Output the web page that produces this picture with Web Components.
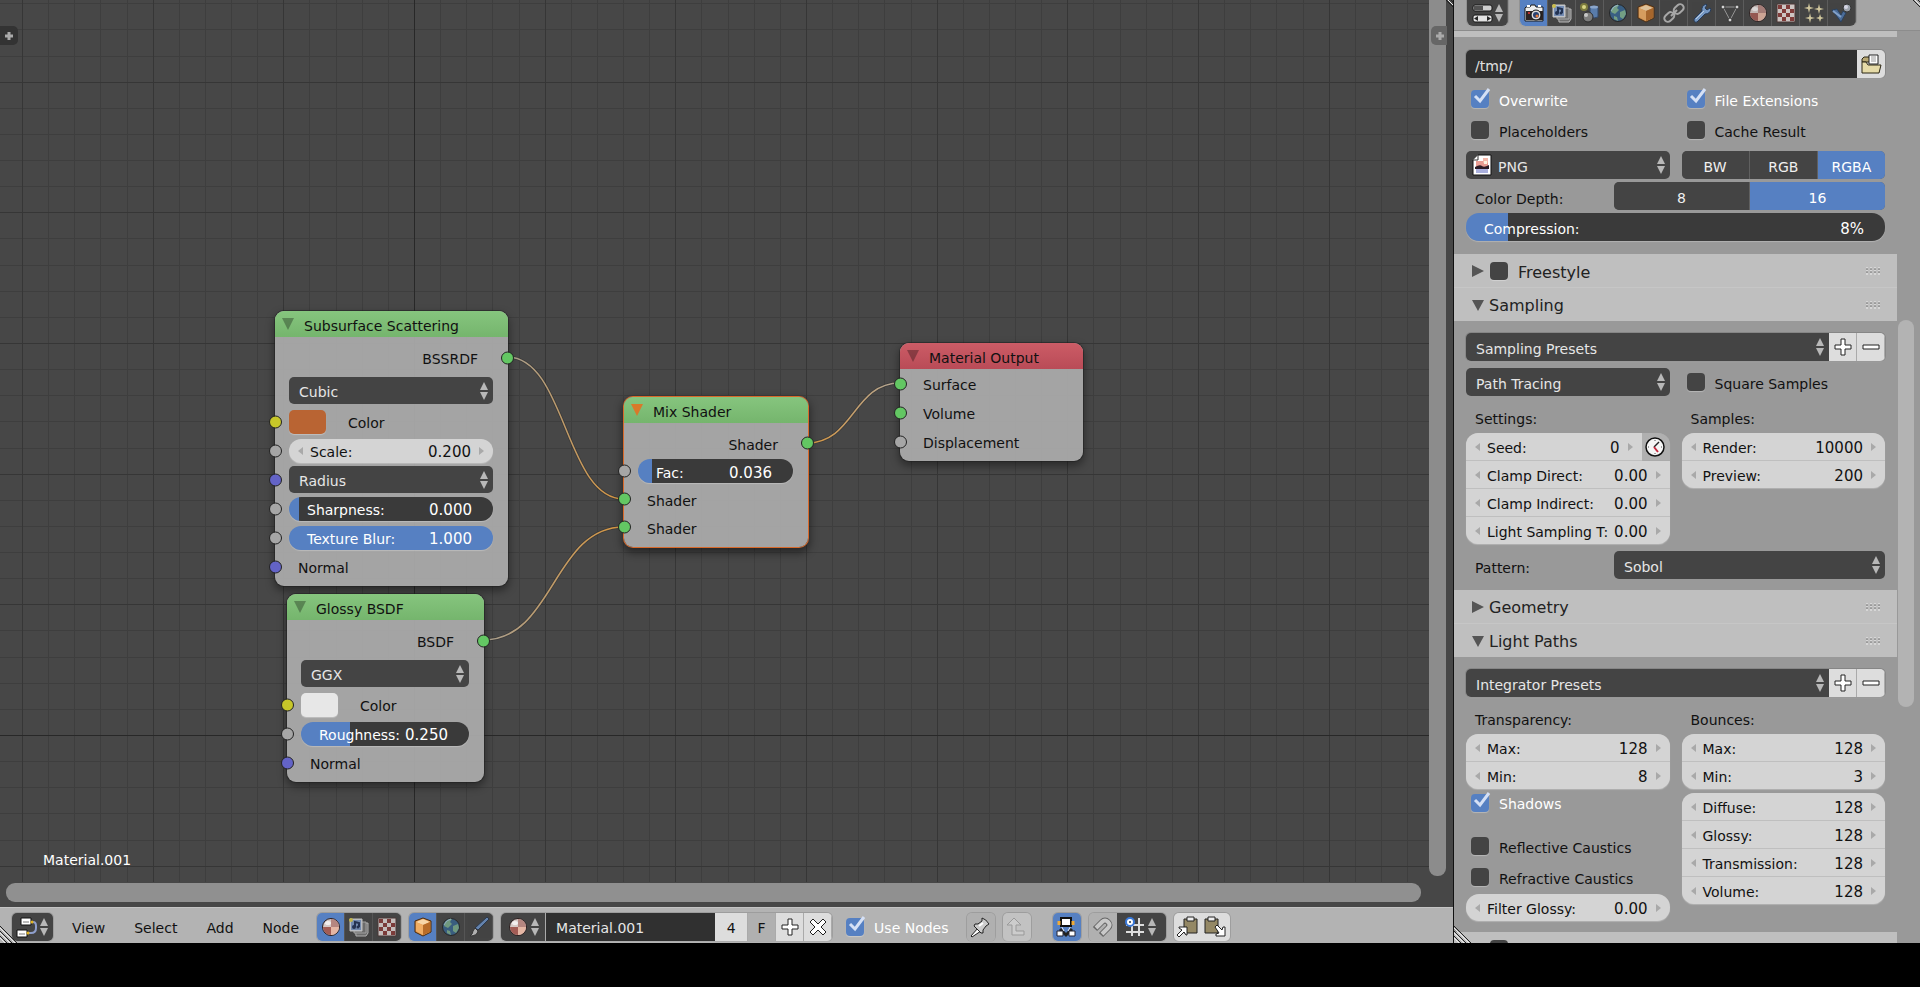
<!DOCTYPE html>
<html lang="en">
<head>
<meta charset="utf-8">
<title>Node Editor</title>
<style>
  html, body { height: 100%; }
  body {
    margin: 0;
    background: #000;
    font-family: "DejaVu Sans", Verdana, sans-serif;
    font-size: 14px;
    color: #111;
    overflow: hidden;
  }
</style>
</head>
<body>
<app-window></app-window>

<script>
const ICONS = {
  camera: `<path d="M2 4h4l1-2h4l1 2h7v14H1V5z" fill="#eee" stroke="#1b1b1b"/><path d="M2 8h17v9H2z" fill="#2c2424"/><path d="M3 3h3M14 3h3" stroke="#fff" stroke-width="2"/><circle cx="12" cy="12" r="5" fill="#ddd" stroke="#111"/><circle cx="12" cy="12" r="3" fill="#29406e"/><circle cx="13" cy="13" r="1.500" fill="#e87a38"/><circle cx="5" cy="10" r="1" fill="#e33"/>`,
  layers: `<path d="M6 7l13-1v10l-2 3-10 0z" fill="#777" stroke="#ccc"/><path d="M5 5h12v11H5z" fill="#777" stroke="#bbb"/><path d="M1 2h12v12H1z" fill="#cfd8e6" stroke="#ddd"/><path d="M2 3h10v10H2z" fill="#7f9cc9"/><path d="M6 10V5l4 1v4" fill="none" stroke="#1d2f55" stroke-width="2"/><circle cx="5" cy="10" r="2" fill="#1d2f55"/><circle cx="9" cy="10" r="1.500" fill="#1d2f55"/><circle cx="2" cy="3" r="2" fill="#e3d34f"/>`,
  scene: `<path d="M10 4q4-2 8 0v10q-4 2-8 0z" fill="#5d86be" stroke="#334b70"/><ellipse cx="14" cy="4" rx="4" ry="1.500" fill="#99b9e4"/><circle cx="4" cy="4" r="4" fill="#85843c"/><circle cx="4" cy="4" r="2" fill="#f3ef8e"/><circle cx="8" cy="14" r="5" fill="#888" stroke="#292929"/><circle cx="6" cy="12" r="2" fill="#ddd"/>`,
  world: `<circle cx="10" cy="10" r="8.500" fill="#38648f" stroke="#222"/><path d="M4 5q4-4 7-3l-2 3 2 2-4 4-4-2zM12 9l5-2 1 4-3 5-3-2zM6 13l3 1 1 4-4-2z" fill="#7caf8f"/><path d="M3 8q2-5 7-6" fill="none" stroke="#a9c9de"/>`,
  cube: `<path d="M10 1l8 3v11l-8 4-8-4V4z" fill="#df9348" stroke="#4a2b0f"/><path d="M10 2l7 3-7 3-7-3z" fill="#f8d7a8"/><path d="M3 5l7 3v10l-7-4z" fill="#f0ad63"/><path d="M10 8l7-3v10l-7 3z" fill="#b86c28"/>`,
  chain: `<g fill="none" stroke="#b9b9b9" stroke-width="2"><rect x="9" y="3" width="11" height="7" rx="3.500" transform="rotate(-42 14 6)"/><rect x="0" y="10" width="11" height="7" rx="3.500" transform="rotate(-42 6 14)"/><path d="M7 13l6-6"/></g>`,
  wrench: `<path d="M2 16l8-8q-1-5 4-7l1 1-2 3 2 2 3-2 1 1q-1 5-6 5l-8 8q-3 1-3-3z" fill="#7fa7da" stroke="#20395d"/><path d="M4 16l8-8" stroke="#d3e4f8"/>`,
  mesh: `<path d="M3 4h14l-7 13z" fill="none" stroke="#a4a4a4"/><g fill="#eee" stroke="#333"><circle cx="3" cy="4" r="2"/><circle cx="17" cy="4" r="2"/><circle cx="10" cy="17" r="2"/></g>`,
  material: `<circle cx="10" cy="10" r="8.500" fill="#d6c9c6" stroke="#281b1b"/><path d="M10 10V2a8 8 0 0 1 8 8z" fill="#b58680"/><path d="M10 10v8a8 8 0 0 0 8-8z" fill="#e5b6a4"/><path d="M10 10H2a8 8 0 0 0 8 8z" fill="#a35c55"/><ellipse cx="7" cy="6" rx="3" ry="2" fill="#fff" opacity=".7"/>`,
  checker: `<path d="M1 1h18v18H1z" fill="#e6dcda" stroke="#4d3432"/><path d="M2 2h4v4H2zM10 2h4v4h-4zM6 6h4v4H6zM14 6h4v4h-4zM2 10h4v4H2zM10 10h4v4h-4zM6 14h4v4H6zM14 14h4v4h-4z" fill="#8b3b39"/>`,
  stars: `<g fill="#eadfae"><path d="M5 0l1 4 4 1-4 1-1 4-1-4-4-1 4-1zM15 1l1 4 4 1-4 1-1 4-1-4-4-1 4-1zM6 10l1 4 4 1-4 1-1 4-1-4-4-1 4-1zM16 11l1 3 3 1-3 1-1 3-1-3-3-1 3-1z"/></g>`,
  physics: `<path d="M0 7l5-1 4 6 2-4 3 2-5 9z" fill="#4c74a8" stroke="#28405f"/><path d="M1 8l8 6" stroke="#8fb2df" stroke-width="2"/><circle cx="15" cy="5" r="4" fill="#a8b1bd" stroke="#333"/><circle cx="14" cy="4" r="2" fill="#eef"/>`,
  brush: `<path d="M18 0l2 2L9 13l-3-2z" fill="#6d94c9" stroke="#24354f"/><path d="M6 11l3 3q-1 5-8 5 3-2 3-5z" fill="#ccc" stroke="#333"/>`,
  props: `<g stroke="#111" stroke-width="1"><rect x="1" y="2" width="19" height="6" rx="2" fill="#e8e8e8"/><rect x="1" y="12" width="19" height="7" rx="2" fill="#fff"/></g><path d="M2 3h9v4H2z" fill="#555"/><path d="M6 13v5l-4-2.500zM15 13v5l4-2.500z" fill="#222"/>`,
  nodes: `<path d="M12 5h4q3 0 3 4v2q0 5-5 5h-2" fill="none" stroke="#8e9ecb" stroke-width="2"/><path d="M4 1h10v7H4zM0 13h10v7H0z" fill="#fff" stroke="#111"/><path d="M6 5h6M2 17h6" stroke="#777"/><circle cx="15" cy="5" r="1.500" fill="#e2b422"/><circle cx="11" cy="16" r="1.500" fill="#e2b422"/>`,
  image: `<path d="M6 0h13v20H1V5z" fill="#fff" stroke="#111"/><path d="M4 6h12v6H4z" fill="#e99c92"/><path d="M11 3h5v5h-5z" fill="#f4b7a9"/><path d="M12 6h3v3h-3z" fill="#fff2dd"/><path d="M3 12q5-3 7-1t7-1v4H3z" fill="#2b1b25"/><path d="M4 14h12v4H4z" fill="#aab0dd"/><path d="M1 5h5V0" fill="#fff" stroke="#333"/>`,
  folder: `<path d="M1 8V5l2-2h5l1 2v3z" fill="#b8a873" stroke="#2b2615"/><path d="M8 1h9v9H8z" fill="#fff" stroke="#222"/><path d="M10 3h5M10 5h5M10 7h5" stroke="#999"/><path d="M1 19V8h4l2 3h13l-2 8z" fill="#e6dba8" stroke="#2b2615"/>`,
  plus: `<path d="M8 2h4v6h6v4h-6v6H8v-6H2V8h6z" fill="#fff" stroke="#222"/>`,
  minus: `<path d="M2 8h16v4H2z" fill="#fff" stroke="#222"/>`,
  cross: `<path d="M5 2l5 5 5-5 3 3-5 5 5 5-3 3-5-5-5 5-3-3 5-5-5-5z" fill="#fff" stroke="#222"/>`,
  clock: `<circle cx="10" cy="10" r="9" fill="#f5f5f5" stroke="#111" stroke-width="1.500"/><path d="M14 5L9 10" stroke="#222" stroke-width="1.500"/><path d="M9 10l4 5" stroke="#c5283d" stroke-width="2"/><path d="M10 3v1M10 16v1M3 10h1M16 10h1" stroke="#555"/>`,
  pin: `<path d="M8 11l3 3-9 6-1-1z" fill="#fff" stroke="#222"/><path d="M12 1q4 1 7 6l-3 2-3 4 0 3-2 0-7-7 1-2h3l4-3z" fill="#ccc" stroke="#222"/><path d="M9 9l4-3" stroke="#fff" stroke-width="2"/>`,
  parent: `<path d="M8 1l7 7h-5v6h8v4H6V8H1z" fill="#ccc" stroke="#999"/>`,
  autonode: `<path d="M4 12l6 6 6-6" fill="none" stroke="#222" stroke-width="3"/><path d="M3 5l5 9M17 5l-5 9" stroke="#e6eefb" fill="none"/><path d="M5 1h10v8H5z" fill="#fff" stroke="#111" stroke-width="2"/><path d="M1 14h6v5H1zM13 14h6v5h-6z" fill="#fff" stroke="#223"/><path d="M3 4v4M17 4v4" stroke="#efab3a" stroke-width="3"/>`,
  magnet: `<g fill="none"><path d="M3 12l7-7q3-3 6 0t0 6l-7 7" stroke="#666" stroke-width="6"/><path d="M4 11l6-6q3-3 6 0t0 6l-6 6" stroke="#c8c8c8" stroke-width="4"/></g>`,
  snap: `<path d="M7 1v18M14 1v18M1 8h18M1 15h18" stroke="#ddd" stroke-width="2"/><circle cx="5" cy="5" r="4" fill="#fff" stroke="#3978d8" stroke-width="2"/><circle cx="5" cy="5" r="1" fill="#234"/>`,
  copy: `<path d="M7 2h13v14H7z" fill="#948865" stroke="#222"/><path d="M10 0h7v4h-7z" fill="#eee" stroke="#222"/><path d="M0 18l5-5-3-2v-1h8v8h-1l-2-3-5 5z" fill="#fff" stroke="#222"/>`,
  paste: `<path d="M0 2h13v14H0z" fill="#948865" stroke="#222"/><path d="M3 0h7v4H3z" fill="#eee" stroke="#222"/><path d="M10 10l2-2 5 5 1-3h2v9h-9v-2l3-1z" fill="#fff" stroke="#222"/>`
};

const arrows = `<svg class="arrows" width="8" height="20" viewBox="0 0 8 20" aria-hidden="true"><path d="M4 1l4 8H0zM4 19l4-8H0z" fill="#b8b8b8"/></svg>`;

// Small base: every element only supplies its template
class BaseElement extends HTMLElement {
  connectedCallback() {
    if (this.shadowRoot) return;
    this.attachShadow({ mode: "open" });
    const template = document.createElement("template");
    template.innerHTML = this.render();
    this.shadowRoot.appendChild(template.content.cloneNode(true));
    this.ready();
  }
  attr(name, fallback = "") {
    return this.hasAttribute(name) ? this.getAttribute(name) : fallback;
  }
  ready() {}
}

class UiIcon extends BaseElement {
  render() {
    return `
    <style>
      :host { display: block; width: 20px; height: 20px; flex: none; }
      svg { display: block; width: 100%; height: 100%; overflow: visible; }
    </style>
    <svg viewBox="0 0 20 20" aria-hidden="true">${ICONS[this.attr("name")]}</svg>`;
  }
}
customElements.define("ui-icon", UiIcon);

class IconButton extends BaseElement {
  render() {
    return `
    <style>
      :host { display: block; flex: none; --bg: #444; }
      :host([kind="light"]) { --bg: #ddd; }
      :host([kind="flat"]) { --bg: #b0b0b0; }
      :host([kind="faded"]) { --bg: #c2c2c2; }
      :host([active]) { --bg: #5680c2; }
      button {
        display: flex; align-items: center; justify-content: center; gap: 3px;
        box-sizing: border-box; height: 100%; width: 100%; min-width: 28px; padding: 0 3px;
        border: 0; background: var(--bg); font: inherit; color: #111;
        border-right: 1px solid var(--edge, transparent);
      }
      :host(:not([active])) ui-icon { opacity: var(--dim, 1); }
      slot { display: block; padding-top: 3px; }
    </style>
    <button type="button" aria-label="${this.attr("label")}">
      ${this.hasAttribute("name") ? `<ui-icon name="${this.attr("name")}"></ui-icon>` : `<slot></slot>`}
      ${this.hasAttribute("menu") ? arrows : ""}
    </button>`;
  }
}
customElements.define("icon-button", IconButton);

// Joins its children into one rounded block
class ButtonRow extends BaseElement {
  render() {
    return `
    <style>
      :host {
        display: flex; height: 28px; border-radius: 5px; overflow: hidden; flex: none;
        box-shadow: 0 0 0 1px rgba(0, 0, 0, .12), 0 1px 1px rgba(255, 255, 255, .25);
      }
      ::slotted([grow]) { flex: 1; min-width: 0; }
    </style>
    <slot></slot>`;
  }
}
customElements.define("button-row", ButtonRow);

class DropDown extends BaseElement {
  render() {
    return `
    <style>
      :host { display: block; height: 28px; min-width: 0; }
      .box {
        position: relative; display: flex; align-items: center; box-sizing: border-box;
        height: 100%; background: #444; border-radius: var(--radius, 5px); padding-right: 5px;
      }
      .box > ui-icon { margin-left: 6px; }
      .icon select { padding-left: 6px; }
      select {
        flex: 1; min-width: 0; height: 100%; box-sizing: border-box; padding: 3px 0 0 10px;
        appearance: none; border: 0; background: none; color: #e6e6e6; font: inherit;
      }
      option { color: #111; }
      .arrows { flex: none; }
    </style>
    <div class="box ${this.hasAttribute("icon") ? "icon" : ""}">
      ${this.hasAttribute("icon") ? `<ui-icon name="${this.attr("icon")}"></ui-icon>` : ""}
      <select aria-label="${this.attr("label", this.attr("value"))}"><option>${this.attr("value")}</option></select>
      ${arrows}
    </div>`;
  }
}
customElements.define("drop-down", DropDown);

class CheckBox extends BaseElement {
  render() {
    return `
    <style>
      :host { display: block; height: 28px; }
      label { display: flex; align-items: center; height: 100%; gap: 10px; padding-left: 5px; white-space: nowrap; }
      :host([checked]) label { color: #fff; }
      .box { position: relative; width: 18px; height: 18px; flex: none; }
      input {
        appearance: none; display: block; margin: 0; width: 18px; height: 18px; border-radius: 4px;
        background: #444; box-shadow: 0 1px 1px rgba(255, 255, 255, .3);
      }
      input:checked { background: #5680c2; }
      svg { position: absolute; left: 0; top: -3px; display: none; pointer-events: none; }
      input:checked + svg { display: block; }
      span { padding-top: 3px; }
    </style>
    <label>
      <div class="box">
        <input type="checkbox" ${this.hasAttribute("checked") ? "checked" : ""}>
        <svg width="20" height="18" viewBox="0 0 20 18"><path d="M4 9l5 5 9-12" fill="none" stroke="#d5e0f5" stroke-width="3"/></svg>
      </div>
      <span>${this.attr("label")}</span>
    </label>`;
  }
}
customElements.define("check-box", CheckBox);

// Number with step arrows, or a filled slider when "fill" is set
class NumField extends BaseElement {
  render() {
    const slider = this.hasAttribute("fill");
    return `
    <style>
      :host { display: block; height: 27px; min-width: 0; }
      label {
        display: flex; align-items: center; box-sizing: border-box; height: 100%;
        padding: 0 8px; background: #d4d4d4; border-radius: var(--radius, 13px);
        box-shadow: 0 1px 1px rgba(255, 255, 255, .25); white-space: nowrap;
      }
      .slider {
        padding: 0 21px 0 18px; color: #fff;
        background: linear-gradient(to right, #5680c2 ${this.attr("fill")}%, #3a3a3a ${this.attr("fill")}%);
      }
      svg { flex: none; }
      span { padding: 3px 0 0 7px; }
      .slider span { padding-left: 0; }
      input {
        flex: 1; width: 20px; min-width: 0; height: 100%; box-sizing: border-box; margin: 0; border: 0;
        padding: 3px 8px 0 0; background: none; color: inherit;
        font: inherit; font-size: 15px; text-align: right;
      }
      .slider input { padding-right: 0; }
    </style>
    <label class="${slider ? "slider" : ""}">
      ${slider ? "" : `<svg width="6" height="8"><path d="M6 0v8L1 4z" fill="#a9a9a9"/></svg>`}
      <span>${this.attr("label")}</span>
      <input type="text" value="${this.attr("value")}">
      ${slider ? "" : `<svg width="6" height="8"><path d="M0 0v8l5-4z" fill="#a9a9a9"/></svg>`}
    </label>`;
  }
}
customElements.define("num-field", NumField);

class NumGroup extends BaseElement {
  render() {
    return `
    <style>
      :host {
        display: flex; flex-direction: column; gap: 1px; border-radius: 12px; overflow: hidden;
        background: #aaa; box-shadow: 0 1px 1px rgba(255, 255, 255, .25); --radius: 0px;
      }
    </style>
    <slot></slot>`;
  }
}
customElements.define("num-group", NumGroup);

class RadioRow extends BaseElement {
  render() {
    const value = this.attr("value");
    const name = this.attr("label");
    return `
    <style>
      :host { display: block; height: 28px; min-width: 0; }
      .row { display: flex; gap: 1px; height: 100%; background: #606060; border-radius: 5px; overflow: hidden; }
      label {
        flex: 1; position: relative; display: flex; align-items: center; justify-content: center;
        background: #444; color: #f0f0f0; padding-top: 3px;
      }
      label:has(input:checked) { background: #5680c2; color: #fff; }
      input { position: absolute; inset: 0; margin: 0; opacity: 0; }
    </style>
    <div class="row" role="radiogroup" aria-label="${name}">
      ${this.attr("options").split(",").map((o) => `
        <label><input type="radio" name="opt" ${o === value ? "checked" : ""}>${o}</label>`).join("")}
    </div>`;
  }
}
customElements.define("radio-row", RadioRow);

class PropsPanel extends BaseElement {
  render() {
    const open = this.hasAttribute("open");
    const tri = open ? "M0 1h12l-6 11z" : "M0 0l12 6-12 6z";
    return `
    <style>
      :host { display: block; }
      header {
        display: flex; align-items: center; height: 33px; background: #bfbfbf;
        padding: 0 15px 0 18px; font-size: 16px; color: #222; gap: 5px;
      }
      :host(:not([open])) header { border-bottom: 1px solid #c6c6c6; }
      button { display: flex; align-items: center; border: 0; padding: 0; background: none; font: inherit; color: inherit; gap: 5px; }
      check-box { margin-left: -4px; }
      .title { padding-top: 2px; }
      .grip { margin-left: auto; }
      .body { padding: 12px 12px 11px; }
    </style>
    <header>
      <button type="button" aria-expanded="${open}" aria-label="${this.attr("label")}">
        <svg width="12" height="12"><path d="${tri}" fill="#555"/></svg>
        ${this.hasAttribute("toggle") ? "" : `<span class="title">${this.attr("label")}</span>`}
      </button>
      ${this.hasAttribute("toggle") ? `<check-box label="${this.attr("label")}"></check-box>` : ""}
      <svg class="grip" width="16" height="8"><path d="M0 1h16M0 4h16M0 7h16" stroke="#eee" stroke-dasharray="2 2"/><path d="M0 2h16M0 5h16" stroke="#777" stroke-dasharray="2 2"/></svg>
    </header>
    ${open ? `<div class="body"><slot></slot></div>` : ""}`;
  }
}
customElements.define("props-panel", PropsPanel);

// Diagonal lines in the corner of an area
class AreaGrip extends BaseElement {
  render() {
    return `
    <style>
      :host { display: block; position: absolute; width: 17px; height: 17px; pointer-events: none; }
      :host([corner="bottom"]) { left: 0; bottom: 0; }
      :host([corner="top"]) { right: -5px; top: -5px; }
      svg { display: block; }
    </style>
    <svg width="17" height="17"><g transform="${this.attr("corner") === "top" ? "rotate(180 8.5 8.5)" : ""}">
      <path d="M0 0l17 17M0 5l12 12M0 10l7 7" stroke="#222"/><path d="M0 2l15 15M0 7l10 10M0 12l5 5" stroke="#eee"/>
    </g></svg>`;
  }
}
customElements.define("area-grip", AreaGrip);

class NodeSocket extends BaseElement {
  render() {
    return `
    <style>
      :host {
        position: absolute; left: -6px; top: 50%; width: 13px; height: 13px; box-sizing: border-box;
        transform: translateY(-50%); border-radius: 50%; border: 1px solid #222; background: #a6a6a6;
      }
      :host([side="out"]) { left: auto; right: -6px; }
      :host([type="shader"]) { background: #63c763; }
      :host([type="color"]) { background: #c7c729; }
      :host([type="vector"]) { background: #6363c7; }
    </style>`;
  }
}
customElements.define("node-socket", NodeSocket);

class NodeRow extends BaseElement {
  render() {
    return `
    <style>
      :host { position: relative; display: flex; align-items: center; height: var(--row, 29px); padding: 0 15px 0 14px; }
      :host([tall]) { height: 33px; }
      :host([out]) { justify-content: flex-end; padding-right: 30px; }
      :host([text]) { padding-left: 23px; }
      span { padding-top: 3px; }
      .swatch { width: 37px; height: 24px; border: 0; border-radius: 5px; padding: 0; margin-right: 22px; background: ${this.attr("swatch")}; box-shadow: 0 1px 1px rgba(255, 255, 255, .3); }
      ::slotted(*) { flex: 1; --radius: 12px; height: 24px; }
      ::slotted(drop-down) { --radius: 5px; height: 27px; }
    </style>
    ${this.hasAttribute("socket") ? `<node-socket type="${this.attr("socket")}" ${this.hasAttribute("out") ? `side="out"` : ""}></node-socket>` : ""}
    ${this.hasAttribute("swatch") ? `<button class="swatch" type="button" aria-label="Pick color"></button>` : ""}
    ${this.hasAttribute("label") ? `<span>${this.attr("label")}</span>` : ""}
    <slot></slot>`;
  }
}
customElements.define("node-row", NodeRow);

class ShaderNode extends BaseElement {
  render() {
    return `
    <style>
      :host {
        position: absolute; display: block; border-radius: 9px; background: rgba(168, 168, 168, .96);
        box-shadow: 0 0 0 1px rgba(30, 30, 30, .5), 0 4px 9px 1px rgba(0, 0, 0, .4);
      }
      :host([selected]) { box-shadow: 0 0 0 1px #d8692a, 0 4px 9px 2px rgba(0, 0, 0, .45); }
      header {
        display: flex; align-items: center; gap: 10px; height: 26px; padding-left: 7px;
        border-radius: 9px 9px 0 0; background: linear-gradient(#86c57e, #75b56d);
      }
      :host([kind="output"]) header { background: linear-gradient(#cc5c66, #b94b57); }
      path { fill: rgba(0, 0, 0, .3); }
      :host([selected]) path { fill: #d9792a; }
      span { padding-top: 4px; }
      .body { padding: var(--pad, 4px 0 5px); }
      :host([kind="output"]) .body { padding-top: 0; }
    </style>
    <header>
      <svg width="12" height="12"><path d="M0 0h12l-6 12z"/></svg>
      <span>${this.attr("label")}</span>
    </header>
    <div class="body"><slot></slot></div>`;
  }
}
customElements.define("shader-node", ShaderNode);

class NodeCanvas extends BaseElement {
  render() {
    return `
    <style>
      :host { display: block; position: relative; overflow: hidden; min-width: 0; min-height: 0; }
      svg.back { position: absolute; inset: 0; width: 100%; height: 100%; }
      .tab {
        position: absolute; left: 0; top: 26px; width: 18px; height: 19px; border: 0; padding: 0;
        border-radius: 0 5px 5px 0; background: #333;
      }
      .name { position: absolute; left: 43px; bottom: 14px; color: #fff; }
      .sss { left: 275px; top: 311px; width: 233px; }
      .glossy { left: 287px; top: 594px; width: 197px; }
      .mix { left: 624px; top: 397px; width: 184px; --row: 28px; --pad: 6px 0; }
      .output { left: 900px; top: 343px; width: 183px; }
    </style>
    <svg class="back">
      <defs>
        <linearGradient id="toMix"><stop offset="0" stop-color="#a89f90"/><stop offset="1" stop-color="#d8963f"/></linearGradient>
        <linearGradient id="fromMix"><stop offset="0" stop-color="#d8963f"/><stop offset="1" stop-color="#b0a79a"/></linearGradient>
      </defs>
      <g class="grid"></g>
      <g class="links" fill="none"></g>
    </svg>
    <shader-node class="sss" label="Subsurface Scattering">
      <node-row tall out label="BSSRDF" socket="shader"></node-row>
      <node-row tall><drop-down label="Falloff" value="Cubic"></drop-down></node-row>
      <node-row socket="color" swatch="#b96433" label="Color"></node-row>
      <node-row socket="value"><num-field label="Scale:" value="0.200"></num-field></node-row>
      <node-row socket="vector"><drop-down value="Radius"></drop-down></node-row>
      <node-row socket="value"><num-field label="Sharpness:" value="0.000" fill="5"></num-field></node-row>
      <node-row socket="value"><num-field label="Texture Blur:" value="1.000" fill="100"></num-field></node-row>
      <node-row text socket="vector" label="Normal"></node-row>
    </shader-node>
    <shader-node class="glossy" label="Glossy BSDF">
      <node-row tall out label="BSDF" socket="shader"></node-row>
      <node-row tall><drop-down label="Distribution" value="GGX"></drop-down></node-row>
      <node-row socket="color" swatch="#e7e7e7" label="Color"></node-row>
      <node-row socket="value"><num-field label="Roughness:" value="0.250" fill="29"></num-field></node-row>
      <node-row text socket="vector" label="Normal"></node-row>
    </shader-node>
    <shader-node class="mix" label="Mix Shader" selected>
      <node-row out label="Shader" socket="shader"></node-row>
      <node-row socket="value"><num-field label="Fac:" value="0.036" fill="9"></num-field></node-row>
      <node-row text socket="shader" label="Shader"></node-row>
      <node-row text socket="shader" label="Shader"></node-row>
    </shader-node>
    <shader-node class="output" kind="output" label="Material Output">
      <node-row text socket="shader" label="Surface"></node-row>
      <node-row text socket="shader" label="Volume"></node-row>
      <node-row text socket="value" label="Displacement"></node-row>
    </shader-node>
    <button class="tab" type="button" aria-label="Show tools"><svg width="18" height="19"><path d="M5 10h8M9 6v8" stroke="#aaa" stroke-width="3"/></svg></button>
    <div class="name">Material.001</div>`;
  }

  ready() {
    this.drawGrid();
    this.drawLinks();
  }

  drawGrid() {
    const origin = { x: 414, y: 735 };
    const step = 392 / 15;
    let minor = "", major = "";
    for (let i = -60; i <= 120; i++) {
      const x = Math.round(origin.x + i * step);
      const y = Math.round(origin.y + i * step);
      const line = `M${x + 0.5} 0V3000M0 ${y + 0.5}H5000`;
      if (i % 5 === 0) major += line;
      else minor += line;
    }
    this.shadowRoot.querySelector(".grid").innerHTML = `
      <path d="M0 0h5000v3000H0z" fill="#474747"/>
      <path d="${minor}" stroke="#3e3e3e"/>
      <path d="${major}" stroke="#363636"/>
      <path d="M${origin.x + 0.5} 0V3000M0 ${origin.y + 0.5}H5000" stroke="#282828"/>`;
  }

  drawLinks() {
    const links = [
      [507, 357, 624, 499, "toMix"],
      [483, 640, 624, 527, "toMix"],
      [807, 443, 900, 383, "fromMix"],
    ];
    this.shadowRoot.querySelector(".links").innerHTML = links.map(([x1, y1, x2, y2, paint]) => {
      const h = Math.round((x2 - x1) / 2);
      const d = `M${x1} ${y1}C${x1 + h} ${y1} ${x2 - h} ${y2} ${x2} ${y2}`;
      return `<path d="${d}" stroke="#2b2b2b" stroke-width="3" opacity=".5"/><path d="${d}" stroke="url(#${paint})" stroke-width="1.500"/>`;
    }).join("");
  }
}
customElements.define("node-canvas", NodeCanvas);

class EditorHeader extends BaseElement {
  render() {
    return `
    <style>
      :host {
        position: relative; display: flex; align-items: center; height: 33px; padding: 2px 0 0 12px;
        background: #b3b3b3; border-top: 1px solid #c4c4c4; overflow: hidden;
      }
      nav { display: flex; margin: 0 4px; }
      nav button { border: 0; background: none; font: inherit; color: #111; padding: 3px 14px 0 15px; }
      button-row + button-row { margin-left: 8px; }
      .tabs { --edge: #555; --dim: .8; }
      .id { width: 331px; }
      .id input {
        flex: 1; min-width: 0; border: 0; padding: 3px 10px 0; background: #303030; color: #e6e6e6; font: inherit;
      }
      .id icon-button { --edge: #aaa; }
      .users { width: 33px; }
      check-box { margin-left: 9px; }
      .pin { margin-left: 18px; }
      .auto { margin-left: 22px !important; }
    </style>
    <button-row><icon-button name="nodes" menu label="Editor type" style="width: 41px"></icon-button></button-row>
    <nav>
      <button type="button">View</button><button type="button">Select</button><button type="button">Add</button><button type="button">Node</button>
    </nav>
    <button-row class="tabs">
      <icon-button name="material" active label="Shader nodes"></icon-button>
      <icon-button name="layers" label="Compositing nodes"></icon-button>
      <icon-button name="checker" label="Texture nodes"></icon-button>
    </button-row>
    <button-row class="tabs">
      <icon-button name="cube" active label="Object"></icon-button>
      <icon-button name="world" label="World"></icon-button>
      <icon-button name="brush" label="Line style"></icon-button>
    </button-row>
    <button-row class="id">
      <icon-button name="material" menu label="Browse material" style="width: 45px"></icon-button>
      <input type="text" value="Material.001" aria-label="Material name">
      <icon-button class="users" kind="light" label="4 users">4</icon-button>
      <icon-button kind="flat" label="Fake user">F</icon-button>
      <icon-button kind="light" name="plus" label="Add material"></icon-button>
      <icon-button kind="light" name="cross" label="Unlink material"></icon-button>
    </button-row>
    <check-box checked label="Use Nodes"></check-box>
    <button-row class="pin"><icon-button kind="flat" name="pin" label="Pin"></icon-button></button-row>
    <button-row><icon-button kind="faded" name="parent" label="Parent node tree"></icon-button></button-row>
    <button-row class="auto"><icon-button active name="autonode" label="Auto offset"></icon-button></button-row>
    <button-row>
      <icon-button kind="flat" name="magnet" label="Snap"></icon-button>
      <icon-button name="snap" menu label="Snap element" style="width: 49px"></icon-button>
    </button-row>
    <button-row>
      <icon-button kind="light" name="copy" label="Copy"></icon-button>
      <icon-button kind="light" name="paste" label="Paste"></icon-button>
    </button-row>
    <area-grip corner="bottom"></area-grip>`;
  }
}
customElements.define("editor-header", EditorHeader);

class NodeEditor extends BaseElement {
  render() {
    return `
    <style>
      :host {
        position: relative; display: grid; min-width: 0; min-height: 0; background: #474747; overflow: hidden;
        grid-template: minmax(0, 1fr) 25px auto / minmax(0, 1fr) 24px; border-right: 1px solid #111;
      }
      .vertical { width: 17px; height: calc(100% - 6px); background: #8c8c8c; border-radius: 0 0 8px 8px; }
      .horizontal { height: 19px; margin: 1px 8px 0 6px; background: #909090; border-radius: 9px; }
      editor-header { grid-column: 1 / -1; }
      .tab {
        position: absolute; right: 6px; top: 26px; width: 16px; height: 19px; border: 0; padding: 0;
        border-radius: 5px 0 0 5px; background: #666;
      }
    </style>
    <node-canvas></node-canvas>
    <div class="vertical"></div>
    <div class="horizontal"></div>
    <div></div>
    <editor-header></editor-header>
    <button class="tab" type="button" aria-label="Show properties"><svg width="16" height="19"><path d="M5 10h8M9 6v8" stroke="#aaa" stroke-width="3"/></svg></button>
    <area-grip corner="top"></area-grip>`;
  }
}
customElements.define("node-editor", NodeEditor);

class PropertiesEditor extends BaseElement {
  render() {
    const tabs = ["camera", "layers", "scene", "world", "cube", "chain", "wrench", "mesh", "material", "checker", "stars", "physics"];
    return `
    <style>
      :host {
        position: relative; display: grid; min-width: 0; min-height: 0; overflow: hidden; background: #999;
        grid-template: 31px minmax(0, 1fr) / minmax(0, 1fr) 23px;
      }
      .top { grid-column: 1 / -1; display: flex; gap: 12px; padding-left: 13px; background: #a5a5a5; border-bottom: 1px solid #8c8c8c; }
      .top button-row { height: 26px; border-radius: 0 0 6px 6px; --edge: #5c5c5c; --dim: .85; }
      .list { overflow: hidden; }
      .output { border-top: 6px solid #bfbfbf; padding: 13px 12px; }
      .stack { display: flex; flex-direction: column; gap: 7px; }
      .tight { display: flex; flex-direction: column; gap: 3px; }
      .cols { display: grid; grid-template-columns: 1fr 1fr; gap: 3px 12px; align-items: start; }
      .split { display: grid; grid-template-columns: 148px 1fr; align-items: center; }
      .label { height: 27px; line-height: 27px; box-sizing: border-box; padding: 3px 0 0 9px; white-space: nowrap; }
      .path { flex: 1; min-width: 0; border: 0; background: #303030; color: #e0e0e0; font: inherit; padding: 3px 9px 0; }
      .presets { --radius: 0px; }
      .presets icon-button { --edge: #aaa; }
      .seed { display: flex; }
      .seed num-field { flex: 1; }
      .seed icon-button { height: 27px; }
      .slider { height: 28px; }
      .checks { margin-top: 16px; }
      .shadows { height: 27px; }
      .bounces { display: flex; flex-direction: column; gap: 4px; }
      .scroll { display: grid; grid-template-rows: 289fr 387fr 231fr; padding: 0 6px 5px 1px; }
      .thumb { grid-row: 2; background: #b3b3b3; border-radius: 8px; }
    </style>
    <div class="top">
      <button-row><icon-button name="props" menu label="Editor type" style="width: 41px"></icon-button></button-row>
      <button-row>${tabs.map((t, i) => `<icon-button name="${t}" label="${t}" ${i ? "" : "active"}></icon-button>`).join("")}</button-row>
    </div>
    <div class="list">
      <section class="output stack">
        <button-row>
          <input class="path" type="text" value="/tmp/" aria-label="Output path">
          <icon-button kind="light" name="folder" label="Browse"></icon-button>
        </button-row>
        <div class="cols">
          <check-box checked label="Overwrite"></check-box><check-box checked label="File Extensions"></check-box>
          <check-box label="Placeholders"></check-box><check-box label="Cache Result"></check-box>
        </div>
        <div class="tight">
          <div class="cols">
            <drop-down icon="image" label="File format" value="PNG"></drop-down>
            <radio-row label="Color mode" options="BW,RGB,RGBA" value="RGBA"></radio-row>
          </div>
          <div class="split">
            <div class="label">Color Depth:</div>
            <radio-row label="Color depth" options="8,16" value="16"></radio-row>
          </div>
          <num-field class="slider" label="Compression:" value="8%" fill="10"></num-field>
        </div>
      </section>
      <props-panel toggle label="Freestyle"></props-panel>
      <props-panel open label="Sampling">
        <div class="stack">
          <button-row class="presets">
            <drop-down grow value="Sampling Presets"></drop-down>
            <icon-button kind="light" name="plus" label="Add preset"></icon-button>
            <icon-button kind="light" name="minus" label="Remove preset"></icon-button>
          </button-row>
          <div class="cols">
            <drop-down label="Integrator" value="Path Tracing"></drop-down>
            <check-box label="Square Samples"></check-box>
          </div>
          <div class="cols">
            <div class="label">Settings:</div><div class="label">Samples:</div>
            <num-group>
              <div class="seed">
                <num-field label="Seed:" value="0"></num-field>
                <icon-button kind="flat" name="clock" label="Animate seed"></icon-button>
              </div>
              <num-field label="Clamp Direct:" value="0.00"></num-field>
              <num-field label="Clamp Indirect:" value="0.00"></num-field>
              <num-field label="Light Sampling T:" value="0.00"></num-field>
            </num-group>
            <num-group>
              <num-field label="Render:" value="10000"></num-field>
              <num-field label="Preview:" value="200"></num-field>
            </num-group>
          </div>
          <div class="split">
            <div class="label">Pattern:</div>
            <drop-down label="Pattern" value="Sobol"></drop-down>
          </div>
        </div>
      </props-panel>
      <props-panel label="Geometry"></props-panel>
      <props-panel open label="Light Paths">
        <div class="stack">
          <button-row class="presets">
            <drop-down grow value="Integrator Presets"></drop-down>
            <icon-button kind="light" name="plus" label="Add preset"></icon-button>
            <icon-button kind="light" name="minus" label="Remove preset"></icon-button>
          </button-row>
          <div class="cols">
            <div class="label">Transparency:</div><div class="label">Bounces:</div>
            <div>
              <num-group>
                <num-field label="Max:" value="128"></num-field>
                <num-field label="Min:" value="8"></num-field>
              </num-group>
              <check-box class="shadows" checked label="Shadows"></check-box>
              <div class="tight checks">
                <check-box label="Reflective Caustics"></check-box>
                <check-box label="Refractive Caustics"></check-box>
                <num-field label="Filter Glossy:" value="0.00"></num-field>
              </div>
            </div>
            <div class="bounces">
              <num-group>
                <num-field label="Max:" value="128"></num-field>
                <num-field label="Min:" value="3"></num-field>
              </num-group>
              <num-group>
                <num-field label="Diffuse:" value="128"></num-field>
                <num-field label="Glossy:" value="128"></num-field>
                <num-field label="Transmission:" value="128"></num-field>
                <num-field label="Volume:" value="128"></num-field>
              </num-group>
            </div>
          </div>
        </div>
      </props-panel>
      <props-panel toggle label="Motion Blur"></props-panel>
    </div>
    <div class="scroll"><div class="thumb"></div></div>
    <area-grip corner="bottom"></area-grip>
    <area-grip corner="top"></area-grip>`;
  }
}
customElements.define("properties-editor", PropertiesEditor);

class AppWindow extends BaseElement {
  render() {
    return `
    <style>
      :host {
        display: grid; box-sizing: border-box; height: 100vh; padding-bottom: 44px;
        grid-template: minmax(0, 1fr) / minmax(0, 727fr) minmax(400px, 233fr);
      }
    </style>
    <node-editor></node-editor>
    <properties-editor></properties-editor>`;
  }
}
customElements.define("app-window", AppWindow);
</script>
</body>
</html>
